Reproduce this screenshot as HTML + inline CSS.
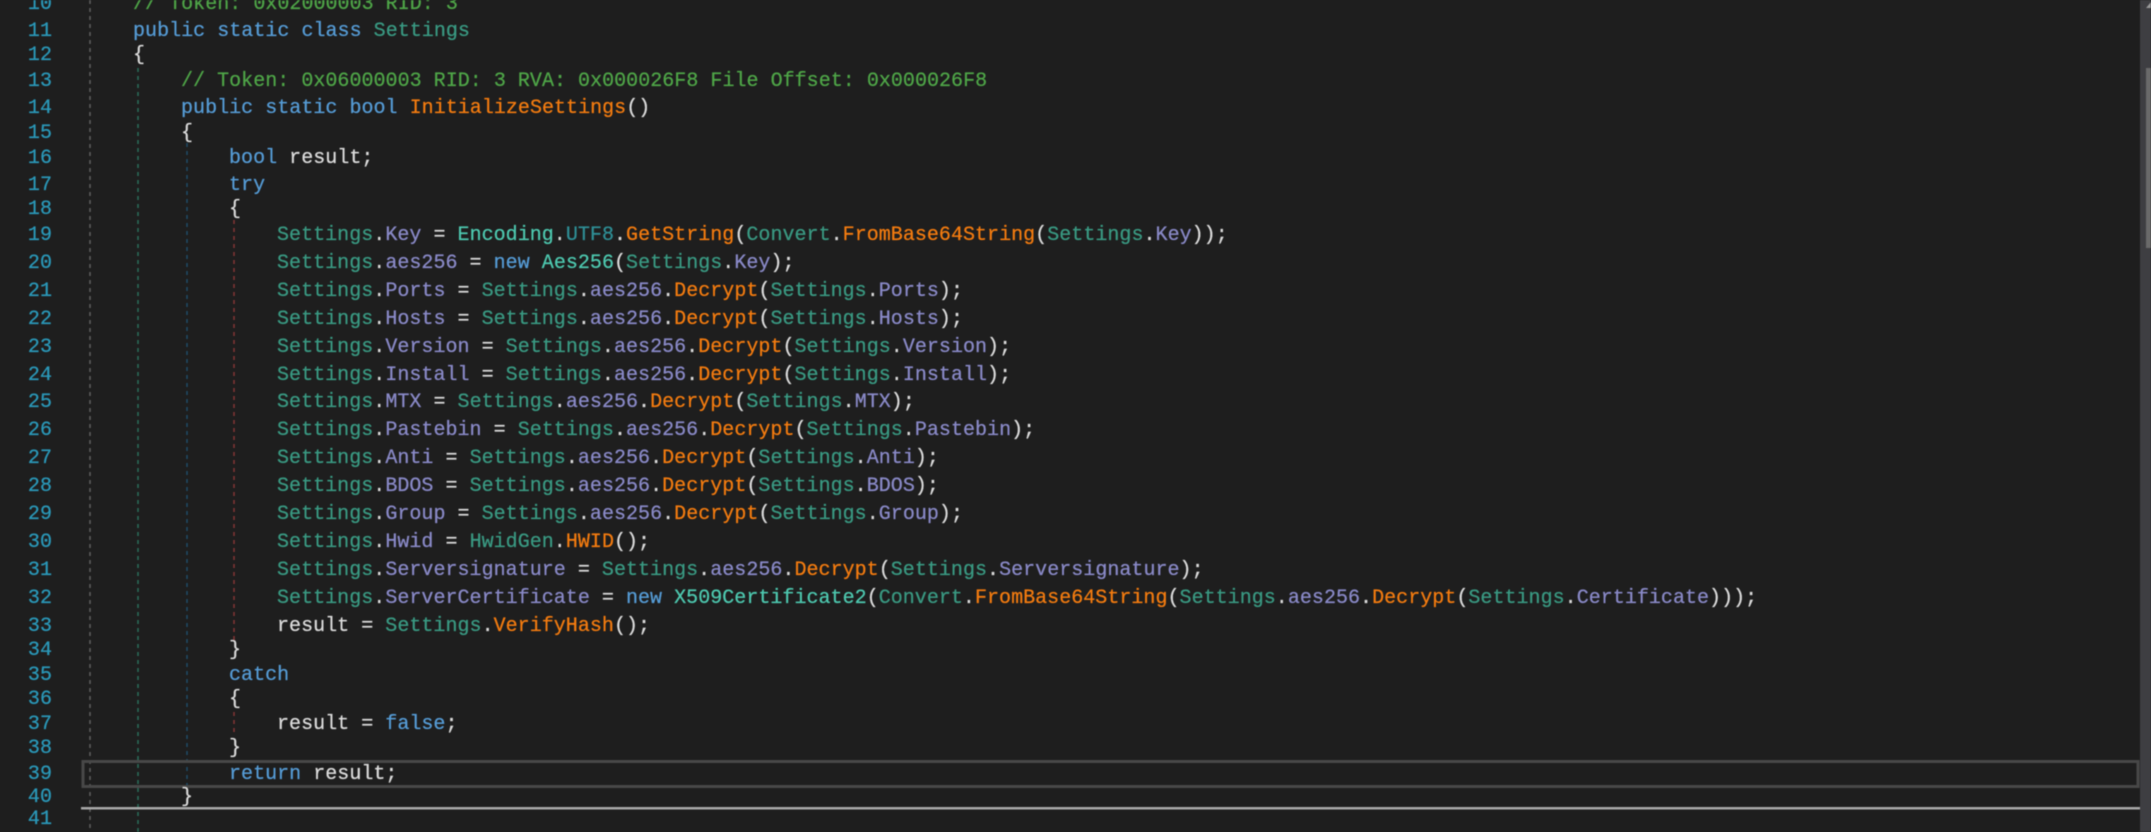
<!DOCTYPE html>
<html><head><meta charset="utf-8"><style>
html,body{margin:0;padding:0;background:#1e1e1e;width:2151px;height:832px;overflow:hidden}
#c{position:absolute;left:0;top:0;width:2151px;height:832px;overflow:hidden;font:20px/28px "Liberation Mono",monospace;color:#dcdcdc;letter-spacing:.03px;filter:blur(.45px);-webkit-text-stroke:.25px}
.l,.n{position:absolute;white-space:pre;height:28px;margin-top:2px}
.n{left:0;width:52px;text-align:right;color:#2b98b8}
.k{color:#569cd6}.c{color:#4fa648}.s{color:#3a9a83}.t{color:#4ec9b0}.p{color:#8a8ac8}.m{color:#f47c10}.f{color:#2f8f96}
svg{position:absolute;left:0;top:0}
</style></head><body><div id="c">
<svg width="2151" height="832">
<g fill="none" stroke-width="1.5" stroke-dasharray="4 4">
<path d="M90 0V832" stroke="#606060"/>
<path d="M138 68V832" stroke="#2a6f5c"/>
<path d="M187 143V790" stroke="#1f4c68"/>
<path d="M234 220V642" stroke="#853636"/>
<path d="M234 712V736" stroke="#853636"/>
</g>
<rect x="83" y="761.5" width="2055" height="25" fill="none" stroke="#484848" stroke-width="3"/>
<rect x="81" y="807" width="2059" height="2.5" fill="#a8a8a8"/>
<rect x="2140" y="0" width="11" height="832" fill="#3e3e42"/>
<rect x="2146" y="68" width="5" height="180" fill="#6a6a6a"/>
<path d="M2146 8L2151 2V8Z" fill="#999"/>
</svg>
<div class="n" style="top:-11px">10</div><div class="l" style="left:133px;top:-11px"><span class="c">// Token: 0x02000003 RID: 3</span></div>
<div class="n" style="top:16px">11</div><div class="l" style="left:133px;top:16px"><span class="k">public static class</span> <span class="s">Settings</span></div>
<div class="n" style="top:40px">12</div><div class="l" style="left:133px;top:40px">{</div>
<div class="n" style="top:66px">13</div><div class="l" style="left:181px;top:66px"><span class="c">// Token: 0x06000003 RID: 3 RVA: 0x000026F8 File Offset: 0x000026F8</span></div>
<div class="n" style="top:93px">14</div><div class="l" style="left:181px;top:93px"><span class="k">public static bool</span> <span class="m">InitializeSettings</span>()</div>
<div class="n" style="top:118px">15</div><div class="l" style="left:181px;top:118px">{</div>
<div class="n" style="top:143px">16</div><div class="l" style="left:229px;top:143px"><span class="k">bool</span> result;</div>
<div class="n" style="top:170px">17</div><div class="l" style="left:229px;top:170px"><span class="k">try</span></div>
<div class="n" style="top:194px">18</div><div class="l" style="left:229px;top:194px">{</div>
<div class="n" style="top:220px">19</div><div class="l" style="left:277px;top:220px"><span class="s">Settings</span>.<span class="p">Key</span> = <span class="t">Encoding</span>.<span class="f">UTF8</span>.<span class="m">GetString</span>(<span class="s">Convert</span>.<span class="m">FromBase64String</span>(<span class="s">Settings</span>.<span class="p">Key</span>));</div>
<div class="n" style="top:248px">20</div><div class="l" style="left:277px;top:248px"><span class="s">Settings</span>.<span class="p">aes256</span> = <span class="k">new</span> <span class="t">Aes256</span>(<span class="s">Settings</span>.<span class="p">Key</span>);</div>
<div class="n" style="top:276px">21</div><div class="l" style="left:277px;top:276px"><span class="s">Settings</span>.<span class="p">Ports</span> = <span class="s">Settings</span>.<span class="p">aes256</span>.<span class="m">Decrypt</span>(<span class="s">Settings</span>.<span class="p">Ports</span>);</div>
<div class="n" style="top:304px">22</div><div class="l" style="left:277px;top:304px"><span class="s">Settings</span>.<span class="p">Hosts</span> = <span class="s">Settings</span>.<span class="p">aes256</span>.<span class="m">Decrypt</span>(<span class="s">Settings</span>.<span class="p">Hosts</span>);</div>
<div class="n" style="top:332px">23</div><div class="l" style="left:277px;top:332px"><span class="s">Settings</span>.<span class="p">Version</span> = <span class="s">Settings</span>.<span class="p">aes256</span>.<span class="m">Decrypt</span>(<span class="s">Settings</span>.<span class="p">Version</span>);</div>
<div class="n" style="top:360px">24</div><div class="l" style="left:277px;top:360px"><span class="s">Settings</span>.<span class="p">Install</span> = <span class="s">Settings</span>.<span class="p">aes256</span>.<span class="m">Decrypt</span>(<span class="s">Settings</span>.<span class="p">Install</span>);</div>
<div class="n" style="top:387px">25</div><div class="l" style="left:277px;top:387px"><span class="s">Settings</span>.<span class="p">MTX</span> = <span class="s">Settings</span>.<span class="p">aes256</span>.<span class="m">Decrypt</span>(<span class="s">Settings</span>.<span class="p">MTX</span>);</div>
<div class="n" style="top:415px">26</div><div class="l" style="left:277px;top:415px"><span class="s">Settings</span>.<span class="p">Pastebin</span> = <span class="s">Settings</span>.<span class="p">aes256</span>.<span class="m">Decrypt</span>(<span class="s">Settings</span>.<span class="p">Pastebin</span>);</div>
<div class="n" style="top:443px">27</div><div class="l" style="left:277px;top:443px"><span class="s">Settings</span>.<span class="p">Anti</span> = <span class="s">Settings</span>.<span class="p">aes256</span>.<span class="m">Decrypt</span>(<span class="s">Settings</span>.<span class="p">Anti</span>);</div>
<div class="n" style="top:471px">28</div><div class="l" style="left:277px;top:471px"><span class="s">Settings</span>.<span class="p">BDOS</span> = <span class="s">Settings</span>.<span class="p">aes256</span>.<span class="m">Decrypt</span>(<span class="s">Settings</span>.<span class="p">BDOS</span>);</div>
<div class="n" style="top:499px">29</div><div class="l" style="left:277px;top:499px"><span class="s">Settings</span>.<span class="p">Group</span> = <span class="s">Settings</span>.<span class="p">aes256</span>.<span class="m">Decrypt</span>(<span class="s">Settings</span>.<span class="p">Group</span>);</div>
<div class="n" style="top:527px">30</div><div class="l" style="left:277px;top:527px"><span class="s">Settings</span>.<span class="p">Hwid</span> = <span class="s">HwidGen</span>.<span class="m">HWID</span>();</div>
<div class="n" style="top:555px">31</div><div class="l" style="left:277px;top:555px"><span class="s">Settings</span>.<span class="p">Serversignature</span> = <span class="s">Settings</span>.<span class="p">aes256</span>.<span class="m">Decrypt</span>(<span class="s">Settings</span>.<span class="p">Serversignature</span>);</div>
<div class="n" style="top:583px">32</div><div class="l" style="left:277px;top:583px"><span class="s">Settings</span>.<span class="p">ServerCertificate</span> = <span class="k">new</span> <span class="t">X509Certificate2</span>(<span class="s">Convert</span>.<span class="m">FromBase64String</span>(<span class="s">Settings</span>.<span class="p">aes256</span>.<span class="m">Decrypt</span>(<span class="s">Settings</span>.<span class="p">Certificate</span>)));</div>
<div class="n" style="top:611px">33</div><div class="l" style="left:277px;top:611px">result = <span class="s">Settings</span>.<span class="m">VerifyHash</span>();</div>
<div class="n" style="top:635px">34</div><div class="l" style="left:229px;top:635px">}</div>
<div class="n" style="top:660px">35</div><div class="l" style="left:229px;top:660px"><span class="k">catch</span></div>
<div class="n" style="top:684px">36</div><div class="l" style="left:229px;top:684px">{</div>
<div class="n" style="top:709px">37</div><div class="l" style="left:277px;top:709px">result = <span class="k">false</span>;</div>
<div class="n" style="top:733px">38</div><div class="l" style="left:229px;top:733px">}</div>
<div class="n" style="top:759px">39</div><div class="l" style="left:229px;top:759px"><span class="k">return</span> result;</div>
<div class="n" style="top:782px">40</div><div class="l" style="left:181px;top:782px">}</div>
<div class="n" style="top:804px">41</div>
</div></body></html>
